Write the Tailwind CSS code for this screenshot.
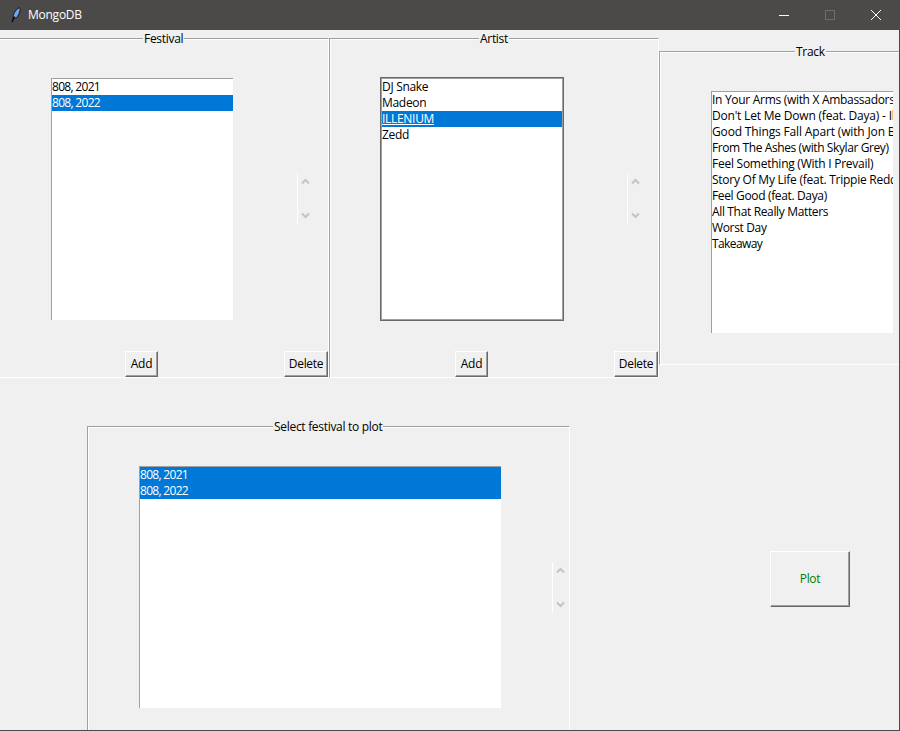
<!doctype html>
<html>
<head>
<meta charset="utf-8">
<script src="https://cdn.jsdelivr.net/npm/@tailwindcss/browser@4"></script>
</head>
<body class="m-0 bg-[#f0f0f0]">
<div class="w-[900px] h-[731px] overflow-hidden flex flex-col bg-[#f0f0f0] text-black text-[12px] leading-[16px] font-['Open_Sans','Liberation_Sans',sans-serif] tracking-[-0.3px] border-r border-b border-[#4c4a48]">
  <!-- title bar -->
  <div class="h-[30px] shrink-0 bg-[#4c4a48] flex items-center text-white">
    <svg class="ml-[10px] w-[16px] h-[16px]" viewBox="0 0 16 16"><path d="M9.5 0.5C10.8 2 9.8 6.5 6.6 10.6L3.2 11.6C2.6 8 5 2.8 9.5 0.5Z" fill="#6fa8ee" stroke="#10151c" stroke-width="1"/><path d="M4.4 9.5L2 15" stroke="#000" stroke-width="1.3" fill="none"/></svg>
    <span class="ml-[2px] tracking-[-0.25px]">MongoDB</span>
    <div class="ml-auto flex h-full">
      <div class="w-[46px] flex items-center justify-center"><svg class="w-[12px] h-[12px]" viewBox="0 0 12 12"><path d="M1 6.5H11" stroke="#fff" stroke-width="1"/></svg></div>
      <div class="w-[46px] flex items-center justify-center"><svg class="w-[12px] h-[12px]" viewBox="0 0 12 12"><rect x="1.5" y="1.5" width="9" height="9" fill="none" stroke="#6e6c6a" stroke-width="1"/></svg></div>
      <div class="w-[46px] flex items-center justify-center"><svg class="w-[12px] h-[12px]" viewBox="0 0 12 12"><path d="M1 1L11 11M11 1L1 11" stroke="#fff" stroke-width="1"/></svg></div>
    </div>
  </div>

  <!-- upper frames -->
  <div class="flex items-start mt-[8px] -ml-[2px] shrink-0">
    <!-- Festival -->
    <div class="relative w-[331px] h-[340px] shrink-0 border-t border-l border-t-[#a0a0a0] border-l-[#a0a0a0] border-r border-b border-r-white border-b-white shadow-[inset_1px_1px_0_#fff] pt-[39px] pl-[52px]">
      <span class="absolute top-[-8px] left-[144px] bg-[#f0f0f0] px-[1px]">Festival</span>
      <div class="flex items-center">
        <div class="w-[182px] h-[242px] bg-white border-t border-l border-[#a0a0a0] overflow-hidden whitespace-nowrap">
          <div class="h-[16px] tracking-[-0.7px]">808, 2021</div>
          <div class="h-[16px] bg-[#0078d7] text-white tracking-[-0.7px]">808, 2022</div>
        </div>
        <div class="ml-[64px] -mt-[2px] w-[16px] h-[51px] border-l border-white flex flex-col justify-between items-center py-[5px] pr-[1px]">
          <svg class="w-[9px] h-[7px]" viewBox="0 0 9 7"><path d="M1 5.5L4.5 2L8 5.5" fill="none" stroke="#c4c4c4" stroke-width="2"/></svg>
          <svg class="w-[9px] h-[7px]" viewBox="0 0 9 7"><path d="M1 1.5L4.5 5L8 1.5" fill="none" stroke="#c4c4c4" stroke-width="2"/></svg>
        </div>
      </div>
      <div class="flex mt-[31px] ml-[74px]">
        <button class="w-[33px] h-[26px] bg-[#f0f0f0] border border-t-white border-l-white border-r-[#696969] border-b-[#696969] shadow-[inset_-1px_-1px_0_#a0a0a0]">Add</button>
        <button class="ml-[126px] w-[44px] h-[26px] bg-[#f0f0f0] border border-t-white border-l-white border-r-[#696969] border-b-[#696969] shadow-[inset_-1px_-1px_0_#a0a0a0]">Delete</button>
      </div>
    </div>

    <!-- Artist -->
    <div class="relative w-[330px] h-[340px] shrink-0 border-t border-l border-t-[#a0a0a0] border-l-[#a0a0a0] border-r border-b border-r-white border-b-white shadow-[inset_1px_1px_0_#fff] pt-[38px] pl-[50px]">
      <span class="absolute top-[-8px] left-[149px] bg-[#f0f0f0] px-[1px]">Artist</span>
      <div class="flex items-center">
        <div class="w-[184px] h-[244px] bg-white border border-[#696969] p-[1px] shadow-[inset_1px_1px_0_#a0a0a0,inset_-1px_-1px_0_#a0a0a0] overflow-hidden whitespace-nowrap">
          <div class="h-[16px]">DJ Snake</div>
          <div class="h-[16px]">Madeon</div>
          <div class="h-[16px] bg-[#0078d7] text-white underline">ILLENIUM</div>
          <div class="h-[16px]">Zedd</div>
        </div>
        <div class="ml-[63px] -mt-[2px] w-[16px] h-[51px] border-l border-white flex flex-col justify-between items-center py-[5px] pr-[1px]">
          <svg class="w-[9px] h-[7px]" viewBox="0 0 9 7"><path d="M1 5.5L4.5 2L8 5.5" fill="none" stroke="#c4c4c4" stroke-width="2"/></svg>
          <svg class="w-[9px] h-[7px]" viewBox="0 0 9 7"><path d="M1 1.5L4.5 5L8 1.5" fill="none" stroke="#c4c4c4" stroke-width="2"/></svg>
        </div>
      </div>
      <div class="flex mt-[30px] ml-[75px]">
        <button class="w-[33px] h-[26px] bg-[#f0f0f0] border border-t-white border-l-white border-r-[#696969] border-b-[#696969] shadow-[inset_-1px_-1px_0_#a0a0a0]">Add</button>
        <button class="ml-[126px] w-[44px] h-[26px] bg-[#f0f0f0] border border-t-white border-l-white border-r-[#696969] border-b-[#696969] shadow-[inset_-1px_-1px_0_#a0a0a0]">Delete</button>
      </div>
    </div>

    <!-- Track -->
    <div class="relative w-[260px] h-[314px] shrink-0 mt-[13px] border-t border-l border-t-[#a0a0a0] border-l-[#a0a0a0] border-b border-b-white shadow-[inset_1px_1px_0_#fff] pt-[39px] pl-[51px]">
      <span class="absolute top-[-8px] left-[135px] bg-[#f0f0f0] px-[1px]">Track</span>
      <div class="w-[182px] h-[242px] bg-white border-t border-l border-[#a0a0a0] overflow-hidden whitespace-nowrap tracking-[-0.35px]">
        <div class="h-[16px] tracking-[-0.3px]">In Your Arms (with X Ambassadors)</div>
        <div class="h-[16px] tracking-[-0.2px]">Don't Let Me Down (feat. Daya) - Illenium Remix</div>
        <div class="h-[16px] tracking-[-0.15px]">Good Things Fall Apart (with Jon Bellion)</div>
        <div class="h-[16px] tracking-[-0.4px]">From The Ashes (with Skylar Grey)</div>
        <div class="h-[16px] tracking-[-0.25px]">Feel Something (With I Prevail)</div>
        <div class="h-[16px] tracking-[-0.25px]">Story Of My Life (feat. Trippie Redd)</div>
        <div class="h-[16px]">Feel Good (feat. Daya)</div>
        <div class="h-[16px]">All That Really Matters</div>
        <div class="h-[16px]">Worst Day</div>
        <div class="h-[16px] tracking-[-0.6px]">Takeaway</div>
      </div>
    </div>
  </div>

  <!-- lower area -->
  <div class="flex items-start mt-[48px] ml-[87px] shrink-0">
    <div class="relative w-[483px] h-[320px] shrink-0 border-t border-l border-t-[#a0a0a0] border-l-[#a0a0a0] border-r border-r-white shadow-[inset_1px_1px_0_#fff] pt-[39px] pl-[51px]">
      <span class="absolute top-[-8px] left-[185px] bg-[#f0f0f0] px-[1px]">Select festival to plot</span>
      <div class="flex items-center">
        <div class="w-[362px] h-[242px] bg-white border-t border-l border-[#a0a0a0] overflow-hidden whitespace-nowrap">
          <div class="h-[16px] bg-[#0078d7] text-white tracking-[-0.7px]">808, 2021</div>
          <div class="h-[16px] bg-[#0078d7] text-white tracking-[-0.7px]">808, 2022</div>
        </div>
        <div class="ml-[51px] w-[16px] h-[51px] border-l border-white flex flex-col justify-between items-center py-[5px] pr-[1px]">
          <svg class="w-[9px] h-[7px]" viewBox="0 0 9 7"><path d="M1 5.5L4.5 2L8 5.5" fill="none" stroke="#c4c4c4" stroke-width="2"/></svg>
          <svg class="w-[9px] h-[7px]" viewBox="0 0 9 7"><path d="M1 1.5L4.5 5L8 1.5" fill="none" stroke="#c4c4c4" stroke-width="2"/></svg>
        </div>
      </div>
    </div>
    <button class="mt-[125px] ml-[200px] w-[80px] h-[56px] bg-[#f0f0f0] text-[#008000] border border-t-white border-l-white border-r-[#696969] border-b-[#696969] shadow-[inset_-1px_-1px_0_#a0a0a0]">Plot</button>
  </div>
</div>
</body>
</html>
